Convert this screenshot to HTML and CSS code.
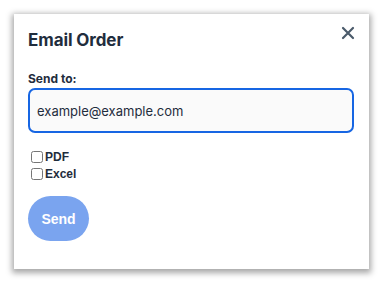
FILE: index.html
```html
<!DOCTYPE html>
<html>
<head>
<meta charset="utf-8">
<link rel="stylesheet" href="styles.css">
</head>
<body>
<div class="dialog">
  <div class="header">
    <h2 class="title">Email Order</h2>
    <button class="close" aria-label="Close">
      <svg width="14" height="14" viewBox="0 0 14 14"><path d="M2 2 L12 12 M12 2 L2 12" stroke="#4b5b6b" stroke-width="2.2" stroke-linecap="round"/></svg>
    </button>
  </div>
  <label class="label" for="to">Send to:</label>
  <input class="email" id="to" type="text" value="example@example.com">
  <div class="checks">
    <label class="check"><input type="checkbox"><span>PDF</span></label>
    <label class="check"><input type="checkbox"><span>Excel</span></label>
  </div>
  <button class="send">Send</button>
</div>
</body>
</html>
```
FILE: styles.css
```css
html, body { margin: 0; padding: 0; background: #ffffff; }
body { width: 384px; height: 282px; overflow: hidden; }
.dialog {
  box-sizing: border-box;
  margin: 14px 0 0 14px;
  width: 355px;
  height: 255px;
  background: #fff;
  box-shadow: 0 2px 6px 2px rgba(0,0,0,0.35);
  padding: 14px 16px 0 14px;
  font-family: Inter, "Noto Sans", sans-serif;
  color: #1f2d3d;
}
.header { display: flex; justify-content: space-between; align-items: flex-start; }
.title { margin: 0; font-size: 17px; font-weight: 700; line-height: 24px; letter-spacing: -0.1px; }
.close { border: 0; background: none; padding: 0; margin: -2px -2px 0 0; width: 14px; height: 14px; display: flex; }
.label { display: block; margin-top: 19px; font-size: 12px; font-weight: 700; line-height: 16px; }
.email {
  box-sizing: border-box;
  display: block;
  margin-top: 1px;
  width: 326px;
  height: 45px;
  border: 2px solid #1766e3;
  border-radius: 7px;
  background: #fafafa;
  padding: 0 0 0 7px;
  font-family: Inter, "Noto Sans", sans-serif;
  font-size: 13px;
  color: #1f2d3d;
  outline: none;
}
.checks { margin-top: 15px; display: flex; flex-direction: column; }
.check { display: flex; align-items: center; height: 17px; font-family: "Liberation Sans", Arial, sans-serif; font-weight: 700; font-size: 12px; }
.check input { margin: 0 2px 0 3px; width: 12px; height: 12px; }
.send {
  margin-top: 14px;
  width: 61px;
  height: 45px;
  border: 0;
  border-radius: 23px;
  background: #7aa4ef;
  color: #fff;
  font-family: "Liberation Sans", Arial, sans-serif;
  font-weight: 700;
  font-size: 14px;
  padding: 0;
}
```
